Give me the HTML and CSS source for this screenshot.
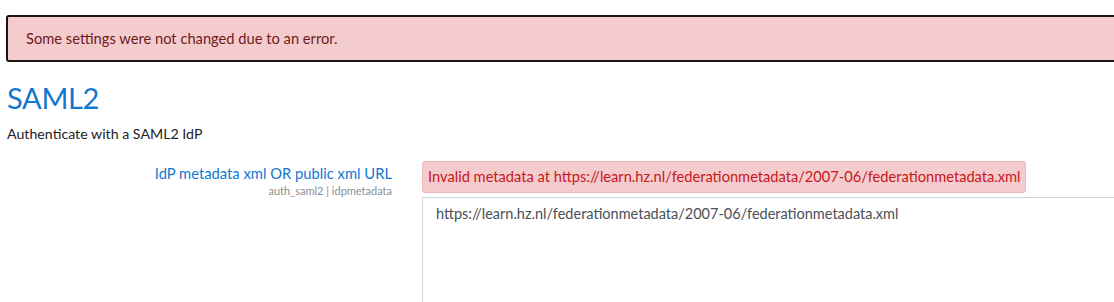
FILE: index.html
```html
<!DOCTYPE html>
<html>
<head>
<meta charset="utf-8">
<link rel="stylesheet" href="styles.css">
</head>
<body>
<div class="page">
  <div class="alert">Some settings were not changed due to an error.</div>
  <h2 class="title">SAML2</h2>
  <p class="desc">Authenticate with a SAML2 IdP</p>
  <div class="setting">
    <div class="label-col">
      <label class="label">IdP metadata xml OR public xml URL</label>
      <div class="name">auth_saml2 | idpmetadata</div>
    </div>
    <div class="control-col">
      <div class="error">Invalid metadata at https://learn.hz.nl/federationmetadata/2007-06/federationmetadata.xml</div>
      <div class="textarea">https://learn.hz.nl/federationmetadata/2007-06/federationmetadata.xml</div>
    </div>
  </div>
</div>
</body>
</html>
```
FILE: styles.css
```css
html, body {
  margin: 0;
  padding: 0;
  overflow: hidden;
  background: #fff;
}
body {
  font-family: "Lato", "Liberation Sans", sans-serif;
  color: #1d2125;
  width: 1114px;
  height: 302px;
}
.page {
  padding: 15px 0 0 7px;
  width: 1140px;
}
.alert {
  width: 1120px;
  height: 43px;
  box-sizing: content-box;
  border: 2px solid #1a1414;
  border-radius: 3px;
  background: #f4cccd;
  color: #6f1a1e;
  font-size: 14.7px;
  line-height: 43px;
  padding: 0 0 0 18px;
  margin-left: -1px;
}
.title {
  margin: 18px 0 0 0;
  font-weight: 400;
  font-size: 29px;
  letter-spacing: -0.3px;
  line-height: 36px;
  color: #1177d1;
}
.desc {
  margin: 8px 0 0 0;
  font-size: 14.2px;
  line-height: 20px;
}
.setting {
  display: flex;
  margin-top: 17px;
  gap: 30px;
}
.label-col {
  flex: 0 0 385px;
  text-align: right;
  padding-top: 2px;
}
.label {
  display: block;
  color: #1177d1;
  font-size: 14.75px;
  line-height: 20px;
}
.name {
  color: #8a8f94;
  font-size: 11px;
  line-height: 14px;
  margin-top: 1px;
}
.control-col {
  display: flex;
  flex-direction: column;
  align-items: flex-start;
  flex: 1 1 auto;
  min-width: 0;
}
.error {
  background: #f4cccd;
  border: 1px solid #eeb8ba;
  border-radius: 3px;
  color: #c8171e;
  font-size: 14.65px;
  line-height: 30px;
  padding: 0 4px 0 5px;
  white-space: nowrap;
}
.textarea {
  margin-top: 4px;
  width: 760px;
  height: 120px;
  border: 1px solid #ced4da;
  color: #495057;
  font-size: 14.5px;
  line-height: 20px;
  padding: 6px 13px;
  white-space: nowrap;
}
```
